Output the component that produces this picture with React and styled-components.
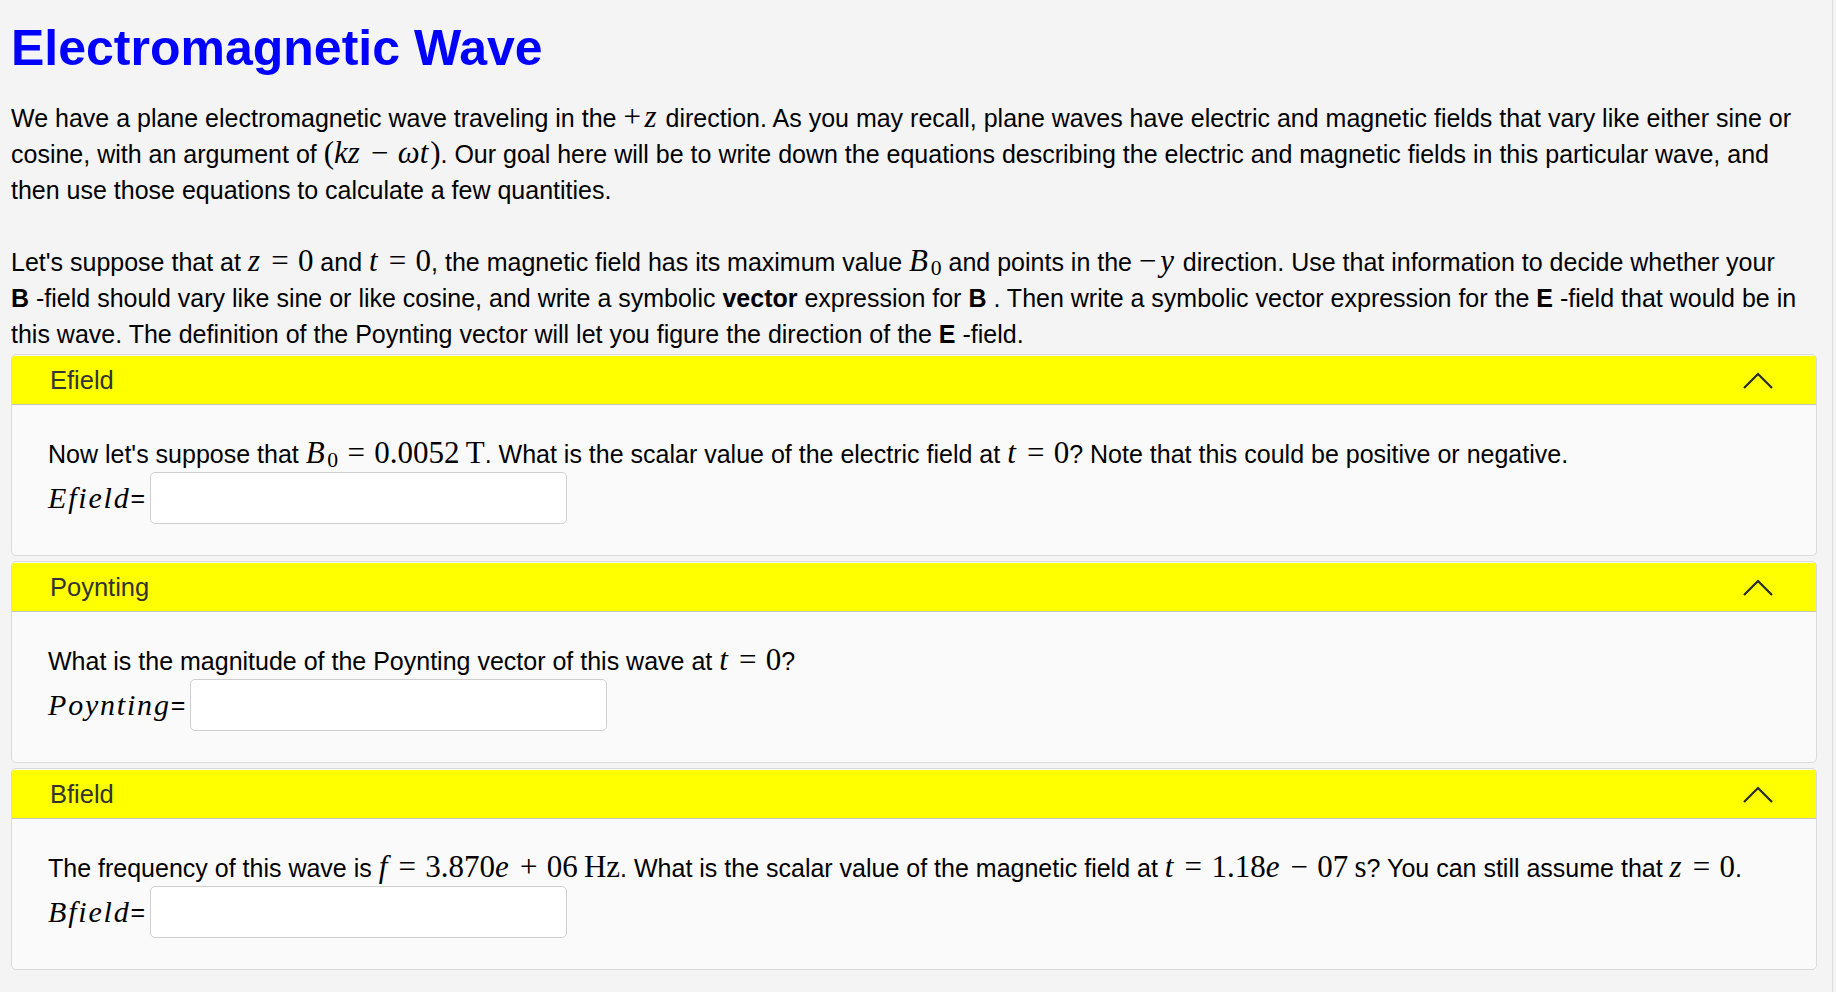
import React from 'react';
import styled, { createGlobalStyle } from 'styled-components';

const GlobalStyle = createGlobalStyle`
  html, body {
    margin: 0;
    padding: 0;
    background: #f4f4f4;
  }
  body {
    font-family: 'Liberation Sans', Arial, sans-serif;
    color: #000;
  }
`;

const Page = styled.div`
  box-sizing: border-box;
  width: 1833px;
  padding: 19px 15px 21px 11px;
  background: #f4f4f4;
  border-right: 1px solid #dcdcdc;
  border-bottom: 1px solid #dcdcdc;
  border-bottom-right-radius: 5px;
`;

const Title = styled.h1`
  margin: 0 0 23px;
  font-size: 50px;
  font-weight: bold;
  color: #0000ff;
  line-height: normal;
`;

const Para = styled.p`
  margin: 0 0 ${(p) => (p.$last ? 2 : 36)}px;
  font-size: 25px;
  line-height: 36px;
`;

const Math = styled.span`
  font-family: 'Liberation Serif', 'Times New Roman', serif;
  font-size: 1.24em;
  line-height: 0;
  white-space: nowrap;
`;

const V = styled.i`
  font-style: italic;
  padding-right: 0.06em;
`;

const Op = styled.span`
  margin: 0 0.3em;
`;

const Sign = styled.span`
  margin-right: 0.12em;
`;

const Unit = styled.span`
  margin-left: 0.2em;
`;

const Sub = styled.sub`
  font-size: 0.7em;
  vertical-align: -0.2em;
  line-height: 0;
  padding-left: 0.04em;
`;

const NoWrap = styled.span`
  white-space: nowrap;
`;

const Card = styled.section`
  border: 1px solid #dadada;
  border-radius: 5px;
  background: #fafafa;
  margin-bottom: 5px;
  overflow: hidden;
`;

const Header = styled.div`
  box-sizing: border-box;
  height: 49px;
  margin-top: 1px;
  display: flex;
  align-items: center;
  justify-content: space-between;
  padding: 0 43px 0 38px;
  background: #ffff00;
  border-bottom: 1px solid #c4c4c4;
  color: #333;
  font-size: 25.5px;
`;

const Body = styled.div`
  padding: 31px 36px 31px 36px;
`;

const Question = styled.div`
  font-size: 25px;
  line-height: 36px;
`;

const AnswerRow = styled.div`
  display: flex;
  align-items: center;
  font-size: 25px;
`;

const Label = styled.span`
  font-family: 'Liberation Serif', 'Times New Roman', serif;
  font-style: italic;
  font-size: 30px;
  letter-spacing: 1.8px;
`;

const Eq = styled.span`
  margin-right: 5px;
`;

const Input = styled.input`
  box-sizing: border-box;
  width: 417px;
  height: 52px;
  border: 1px solid #cfcfcf;
  border-radius: 5px;
  background: #fff;
  font-size: 22px;
  padding: 0 10px;
`;

const Chevron = () => (
  <svg width="30" height="17" viewBox="0 0 30 17" fill="none">
    <polyline points="1,16 15,2 29,16" stroke="#2a2a2a" strokeWidth="2.2" />
  </svg>
);

const Panel = ({ title, children, label }) => (
  <Card>
    <Header>
      <span>{title}</span>
      <Chevron />
    </Header>
    <Body>
      <Question>{children}</Question>
      <AnswerRow>
        <Label>{label}</Label>
        <Eq>=</Eq>
        <Input type="text" />
      </AnswerRow>
    </Body>
  </Card>
);

export default function App() {
  return (
    <>
      <GlobalStyle />
      <Page>
        <Title>Electromagnetic Wave</Title>
        <Para>
          We have a plane electromagnetic wave traveling in the{' '}
          <Math>
            <Sign>+</Sign>
            <V>z</V>
          </Math>{' '}
          direction. As you may recall, plane waves have electric and magnetic fields that vary like
          either sine or cosine, with an argument of{' '}
          <Math>
            (<V>kz</V>
            <Op>−</Op>
            <V>ωt</V>)
          </Math>
          . Our goal here will be to write down the equations describing the electric and magnetic
          fields in this particular wave, and then use those equations to calculate a few quantities.
        </Para>
        <Para $last>
          Let's suppose that at{' '}
          <Math>
            <V>z</V>
            <Op>=</Op>0
          </Math>{' '}
          and{' '}
          <Math>
            <V>t</V>
            <Op>=</Op>0
          </Math>
          , the magnetic field has its maximum value{' '}
          <Math>
            <V>B</V>
            <Sub>0</Sub>
          </Math>{' '}
          and points in the{' '}
          <Math>
            <Sign>−</Sign>
            <V>y</V>
          </Math>{' '}
          direction. Use that information to decide whether your{' '}
          <NoWrap>
            <b>B</b> -field
          </NoWrap>{' '}
          should vary like sine or like cosine, and write a symbolic <b>vector</b> expression for{' '}
          <b>B</b> . Then write a symbolic vector expression for the{' '}
          <NoWrap>
            <b>E</b> -field
          </NoWrap>{' '}
          that would be in this wave. The definition of the Poynting vector will let you figure the
          direction of the{' '}
          <NoWrap>
            <b>E</b> -field.
          </NoWrap>
        </Para>

        <Panel title="Efield" label="Efield">
          Now let's suppose that{' '}
          <Math>
            <V>B</V>
            <Sub>0</Sub>
            <Op>=</Op>0.0052<Unit>T</Unit>
          </Math>
          . What is the scalar value of the electric field at{' '}
          <Math>
            <V>t</V>
            <Op>=</Op>0
          </Math>
          ? Note that this could be positive or negative.
        </Panel>

        <Panel title="Poynting" label="Poynting">
          What is the magnitude of the Poynting vector of this wave at{' '}
          <Math>
            <V>t</V>
            <Op>=</Op>0
          </Math>
          ?
        </Panel>

        <Panel title="Bfield" label="Bfield">
          The frequency of this wave is{' '}
          <Math>
            <V>f</V>
            <Op>=</Op>3.870<V>e</V>
            <Op>+</Op>06<Unit>Hz</Unit>
          </Math>
          . What is the scalar value of the magnetic field at{' '}
          <Math>
            <V>t</V>
            <Op>=</Op>1.18<V>e</V>
            <Op>−</Op>07<Unit>s</Unit>
          </Math>
          ? You can still assume that{' '}
          <Math>
            <V>z</V>
            <Op>=</Op>0
          </Math>
          .
        </Panel>
      </Page>
    </>
  );
}
